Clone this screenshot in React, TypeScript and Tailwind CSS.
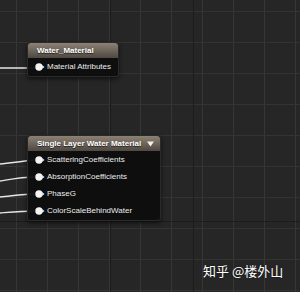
import React from 'react';

type NodeProps = {
  title: string;
  pins: string[];
  left: string;
  top: string;
  width: string;
  dropdown?: boolean;
};

const GRID = [16, 47, 78, 109, 140, 171, 202, 233, 264, 295];

// Canvas grid, drawn as a picture behind the nodes.
function Grid() {
  return (
    <svg className="absolute inset-0" width={300} height={292}>
      {GRID.map((x) => (
        <line key={'v' + x} x1={x + 0.5} y1={0} x2={x + 0.5} y2={292} stroke="#363636" strokeWidth={1} />
      ))}
      {GRID.map((y) => (
        <line key={'h' + y} x1={0} y1={y - 5 + 0.5} x2={300} y2={y - 5 + 0.5} stroke="#333333" strokeWidth={1} />
      ))}
      <line x1={110.5} y1={0} x2={110.5} y2={292} stroke="#1b1b1b" strokeWidth={1} />
      <line x1={193.5} y1={0} x2={193.5} y2={292} stroke="#1c1c1c" strokeWidth={1} />
      <line x1={0} y1={221.5} x2={300} y2={221.5} stroke="#1c1c1c" strokeWidth={1} />
      {/* wires */}
      <g stroke="#e6e6e6" strokeWidth={1.4} fill="none">
        <path d="M0 68 L36 68" />
        <path d="M0 164 C12 163 22 161 36 160" />
        <path d="M0 181 C12 179 22 177 36 177" />
        <path d="M0 197 C12 196 22 194 36 194" />
        <path d="M0 213 C12 212 22 211 36 211" />
      </g>
    </svg>
  );
}

function Pin() {
  return (
    <svg width={10} height={8} viewBox="0 0 10 8" className="shrink-0">
      <circle cx={4} cy={4} r={3.7} fill="#f4f4f4" />
      <path d="M7.2 2.2 L9.5 4 L7.2 5.8 Z" fill="#f4f4f4" />
    </svg>
  );
}

function MaterialNode({ title, pins, left, top, width, dropdown }: NodeProps) {
  return (
    <div
      className={`absolute ${left} ${top} ${width} rounded-[3px] border border-[#2a2a2a] bg-[#0d0d0d]/95 shadow-[0_2px_4px_rgba(0,0,0,0.6)]`}
    >
      <div className="flex h-[15px] items-center justify-between rounded-t-[3px] bg-[linear-gradient(180deg,#8c8174_0%,#6b6258_55%,#4e4842_100%)] px-[9px]">
        <span className="text-[8px] font-bold leading-none text-white [text-shadow:0_1px_1px_rgba(0,0,0,0.7)]">{title}</span>
        {dropdown && (
          <svg width={7} height={6} viewBox="0 0 7 6" className="-mr-[3px]">
            <path d="M0 0.5 L7 0.5 L3.5 5.5 Z" fill="#f0f0f0" />
          </svg>
        )}
      </div>
      <div className="flex flex-col gap-[9px] pb-[5px] pl-[7px] pt-[5px]">
        {pins.map((p) => (
          <div key={p} className="flex h-[8px] items-center gap-[2px]">
            <Pin />
            <span className="text-[8px] leading-none text-[#ececec]">{p}</span>
          </div>
        ))}
      </div>
    </div>
  );
}

export default function App() {
  return (
    <div className="relative h-[292px] w-[300px] overflow-hidden bg-[#262626] font-['Liberation_Sans',Arial,sans-serif]">
      <Grid />
      <MaterialNode
        title="Water_Material"
        pins={['Material Attributes']}
        left="left-[27px]"
        top="top-[42px]"
        width="w-[92px]"
      />
      <MaterialNode
        title="Single Layer Water Material"
        pins={['ScatteringCoefficients', 'AbsorptionCoefficients', 'PhaseG', 'ColorScaleBehindWater']}
        left="left-[27px]"
        top="top-[135px]"
        width="w-[134px]"
        dropdown
      />
      <div className="absolute left-[203px] top-[264px] font-['Noto_Sans_CJK_SC',sans-serif] text-[13px] leading-none text-white [text-shadow:0_0_2px_rgba(0,0,0,0.6)]">
        知乎 @楼外山
      </div>
    </div>
  );
}
